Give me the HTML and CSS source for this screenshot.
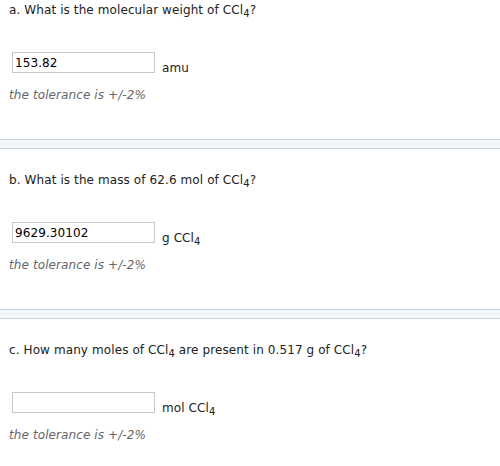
FILE: index.html
```html
<!DOCTYPE html>
<html>
<head>
<meta charset="utf-8">
<link rel="stylesheet" href="styles.css">
</head>
<body>
<div class="part">
  <div class="question">a. What is the molecular weight of CCl<sub>4</sub>?</div>
  <div class="answer-row">
    <input class="answer" type="text" value="153.82">
    <span class="unit">amu</span>
  </div>
  <div class="tolerance">the tolerance is +/-2%</div>
</div>
<div class="separator"></div>
<div class="part">
  <div class="question">b. What is the mass of 62.6 mol of CCl<sub>4</sub>?</div>
  <div class="answer-row">
    <input class="answer" type="text" value="9629.30102">
    <span class="unit">g CCl<sub>4</sub></span>
  </div>
  <div class="tolerance">the tolerance is +/-2%</div>
</div>
<div class="separator"></div>
<div class="part">
  <div class="question">c. How many moles of CCl<sub>4</sub> are present in 0.517 g of CCl<sub>4</sub>?</div>
  <div class="answer-row">
    <input class="answer" type="text" value="">
    <span class="unit">mol CCl<sub>4</sub></span>
  </div>
  <div class="tolerance">the tolerance is +/-2%</div>
</div>
</body>
</html>
```
FILE: styles.css
```css
html, body {
  margin: 0;
  padding: 0;
  background: #fff;
}
body {
  font-family: "DejaVu Sans", Verdana, sans-serif;
  font-size: 12px;
  letter-spacing: 0.1px;
  color: #222;
  width: 500px;
}
.part {
  padding: 3px 0 0 9px;
  display: flex;
  flex-direction: column;
}
.question {
  line-height: 14px;
  height: 14px;
}
sub {
  font-size: 10px;
  vertical-align: -3px;
  line-height: 0;
}
.answer-row {
  display: flex;
  align-items: flex-start;
  margin-top: 35px;
  margin-left: 3px;
}
.answer {
  box-sizing: border-box;
  width: 143px;
  height: 21px;
  margin: 0;
  border: 1px solid #c8c8c8;
  padding: 1px 2px 0;
  font-family: "DejaVu Sans", Verdana, sans-serif;
  font-size: 12px;
  letter-spacing: 0.1px;
  color: #000;
  outline: none;
  background: #fff;
}
.unit {
  margin-left: 7px;
  padding-top: 10px;
  line-height: 12px;
}
.tolerance {
  margin-top: 14px;
  font-style: italic;
  color: #666;
  line-height: 14px;
  height: 51px;
}
.separator {
  height: 8px;
  background: #f4f7fa;
  border-top: 1px solid #c9d4e0;
  border-bottom: 1px solid #c9d4e0;
  margin-bottom: 21px;
}
```
